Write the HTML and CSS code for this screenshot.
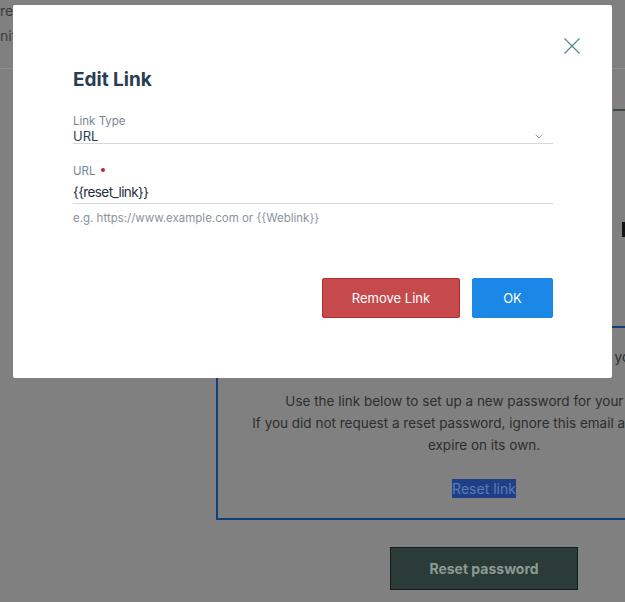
FILE: index.html
```html
<!DOCTYPE html>
<html lang="en">
<head>
<meta charset="utf-8">
<title>Edit Link</title>
<link rel="stylesheet" href="styles.css">
</head>
<body>
<div class="page">
  <div class="page-head">
    <div class="head-line">recipients</div>
    <div class="head-line">nitialize</div>
  </div>
  <div class="divider"></div>
  <div class="tab-row"><span class="tab-bar"></span></div>
  <div class="heading-row"><span class="heading-glyph"></span></div>
  <div class="column">
    <div class="email-box">
      <p class="email-intro">Hello, we received a request to reset the password for your account.</p>
      <p class="email-text">Use the link below to set up a new password for your account.<br>If you did not request a reset password, ignore this email and the link will<br>expire on its own.</p>
      <p class="email-link"><span class="link-sel">Reset link</span></p>
    </div>
    <div class="reset-btn">Reset password</div>
  </div>
</div>

<div class="overlay">
  <div class="modal">
    <button class="close" aria-label="Close">
      <svg width="16" height="16" viewBox="0 0 16 16"><path d="M0.5 0.5 L15.5 15.5 M15.5 0.5 L0.5 15.5" stroke="#4f8589" stroke-width="1.1" fill="none"/></svg>
    </button>
    <h2 class="title">Edit Link</h2>
    <div class="field">
      <div class="label">Link Type</div>
      <div class="control">
        <span class="value">URL</span>
        <svg class="chev" width="8" height="5" viewBox="0 0 8 5"><path d="M0.5 0.5 L4 4 L7.5 0.5" stroke="#9aa3ad" stroke-width="1" fill="none"/></svg>
      </div>
    </div>
    <div class="field field-url">
      <div class="label">URL <span class="req"></span></div>
      <div class="control control-input">
        <span class="value value-input">{{reset_link}}</span>
      </div>
      <div class="hint">e.g. https://www.example.com or {{Weblink}}</div>
    </div>
    <div class="actions">
      <button class="btn btn-remove">Remove Link</button>
      <button class="btn btn-ok">OK</button>
    </div>
  </div>
</div>
</body>
</html>
```

FILE: styles.css
```css
* { box-sizing: border-box; }
html, body { margin: 0; padding: 0; }
body {
  width: 625px;
  height: 602px;
  overflow: hidden;
  background: #808080;
  font-family: Inter, "Noto Sans", sans-serif;
  position: relative;
}

/* background page (already dimmed) */
.page { width: 625px; height: 602px; overflow: hidden; }
.page-head { padding-top: 2px; margin-left: 0; color: #3b3b3b; font-size: 14px; }
.head-line { height: 25px; line-height: 17px; }
.divider { margin-top: 16px; height: 1px; background: #8e8e8e; }
.tab-row { display: flex; justify-content: flex-end; margin-top: 40px; }
.tab-bar { width: 12px; height: 2px; background: #3f4c40; }
.heading-row { display: flex; justify-content: flex-end; margin-top: 111px; }
.heading-glyph { width: 3px; height: 15px; background: #111; }

.column { margin-left: 216px; width: 536px; margin-top: 89px; text-align: center; }
.email-box {
  border: 2px solid #0f3f78;
  padding: 18px 20px 18px;
  color: #2e2e2e;
  font-size: 13.5px;
  line-height: 22px;
}
.email-box p { margin: 0; }
.email-intro { margin-bottom: 22px !important; }
.email-link { margin-top: 22px !important; }
.link-sel { background: #1e3f87; color: #5d7cb3; font-size: 14px; padding: 1px 0; }
.reset-btn {
  width: 188px;
  height: 43px;
  margin: 27px auto 0;
  background: #2b3b37;
  border: 1px solid #151b19;
  color: #8a9b94;
  font-weight: 700;
  font-size: 14px;
  line-height: 41px;
}

/* modal */
.overlay { position: absolute; inset: 0; }
.modal {
  position: absolute;
  left: 13px;
  top: 5px;
  width: 599px;
  height: 373px;
  background: #fff;
  border-radius: 2px;
  padding: 63px 59px 0 60px;
}
.close {
  position: absolute;
  right: 32px;
  top: 33px;
  width: 16px;
  height: 16px;
  padding: 0;
  border: 0;
  background: none;
}
.close svg { display: block; }
.title {
  margin: 0;
  font-size: 19px;
  line-height: 24px;
  font-weight: 700;
  color: #283d54;
}
.field { margin-top: 22px; }
.label { font-size: 11.5px; line-height: 14px; color: #7b8692; display: flex; align-items: center; gap: 6px; }
.req { width: 4px; height: 4px; border-radius: 50%; background: #c1272d; margin-top: -2px; }
.control {
  display: flex;
  align-items: center;
  justify-content: space-between;
  border-bottom: 1px solid #d5d8dc;
  height: 16px;
}
.value { font-size: 13px; line-height: 16px; color: #2b3f55; }
.chev { margin-right: 10px; margin-top: 2px; }
.field-url { margin-top: 20px; }
.control-input { height: 24px; margin-top: 2px; }
.value-input { font-size: 13.5px; letter-spacing: -0.6px; color: #1f2f40; }
.hint { margin-top: 7px; font-size: 11.5px; line-height: 14px; color: #8a939c; }
.actions { display: flex; justify-content: flex-end; gap: 12px; margin-top: 53px; }
.btn {
  height: 40px;
  border-radius: 2px;
  font-family: Inter, "Noto Sans", sans-serif;
  font-size: 13px;
  color: #fff;
  cursor: pointer;
}
.btn-remove { width: 138px; background: #c64a4b; border: 1px solid #b3292c; }
.btn-ok { width: 81px; background: #1b87e6; border: 1px solid #1b87e6; }
```
